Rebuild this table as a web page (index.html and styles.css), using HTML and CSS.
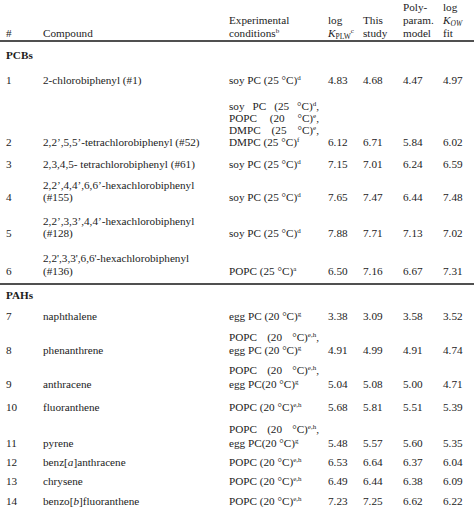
FILE: index.html
```html
<!DOCTYPE html>
<html>
<head>
<meta charset="utf-8">
<link rel="stylesheet" href="styles.css">
</head>
<body>
<table class="tbl">
<colgroup><col class="c-num"><col class="c-cmp"><col class="c-cond"><col class="c-d1"><col class="c-d2"><col class="c-d3"><col class="c-d4"></colgroup>
<thead>
<tr>
<th>#</th>
<th>Compound</th>
<th>Experimental<br>conditions<sup>b</sup></th>
<th>log<br><i>K</i><sub>PLW</sub><sup>c</sup></th>
<th>This<br>study</th>
<th>Poly-<br>param.<br>model</th>
<th>log<br><i>K</i><sub><i>OW</i></sub><br>fit</th>
</tr>
</thead>
<tbody>
<tr class="sec"><td colspan="7">PCBs</td></tr>
<tr class="pt9"><td>1</td><td>2-chlorobiphenyl (#1)</td><td class="cond">soy PC (25 °C)<sup>d</sup></td><td>4.83</td><td>4.68</td><td>4.47</td><td>4.97</td></tr>
<tr class="pt9"><td>2</td><td>2,2’,5,5’-tetrachlorobiphenyl (#52)</td><td class="cond"><span class="jl">soy PC (25 °C)<sup>d</sup>,</span><span class="jl">POPC (20 °C)<sup>e</sup>,</span><span class="jl">DMPC (25 °C)<sup>e</sup>,</span>DMPC (25 °C)<sup>f</sup></td><td>6.12</td><td>6.71</td><td>5.84</td><td>6.02</td></tr>
<tr class="pt5"><td>3</td><td>2,3,4,5- tetrachlorobiphenyl (#61)</td><td class="cond">soy PC (25 °C)<sup>d</sup></td><td>7.15</td><td>7.01</td><td>6.24</td><td>6.59</td></tr>
<tr class="pt5"><td>4</td><td>2,2’,4,4’,6,6’-hexachlorobiphenyl<br>(#155)</td><td class="cond">soy PC (25 °C)<sup>d</sup></td><td>7.65</td><td>7.47</td><td>6.44</td><td>7.48</td></tr>
<tr class="pt7"><td>5</td><td>2,2’,3,3’,4,4’-hexachlorobiphenyl<br>(#128)</td><td class="cond">soy PC (25 °C)<sup>d</sup></td><td>7.88</td><td>7.71</td><td>7.13</td><td>7.02</td></tr>
<tr class="pt9 sec-end"><td>6</td><td>2,2',3,3',6,6'-hexachlorobiphenyl<br>(#136)</td><td class="cond">POPC (25 °C)<sup>a</sup></td><td>6.50</td><td>7.16</td><td>6.67</td><td>7.31</td></tr>
<tr class="sec pt4"><td colspan="7">PAHs</td></tr>
<tr class="pt5"><td>7</td><td>naphthalene</td><td class="cond">egg PC (20 °C)<sup>g</sup></td><td>3.38</td><td>3.09</td><td>3.58</td><td>3.52</td></tr>
<tr class="pt5"><td>8</td><td>phenanthrene</td><td class="cond"><span class="jl">POPC (20 °C)<sup>e,h</sup>,</span>egg PC (20 °C)<sup>g</sup></td><td>4.91</td><td>4.99</td><td>4.91</td><td>4.74</td></tr>
<tr class="pt4"><td>9</td><td>anthracene</td><td class="cond"><span class="jl">POPC (20 °C)<sup>e,h</sup>,</span><span class="ln2">egg PC(20 °C)<sup>g</sup></span></td><td>5.04</td><td>5.08</td><td>5.00</td><td>4.71</td></tr>
<tr class="pt6"><td>10</td><td>fluoranthene</td><td class="cond">POPC (20 °C)<sup>e,h</sup></td><td>5.68</td><td>5.81</td><td>5.51</td><td>5.39</td></tr>
<tr class="pt6"><td>11</td><td>pyrene</td><td class="cond"><span class="jl">POPC (20 °C)<sup>e,h</sup>,</span><span class="ln2">egg PC(20 °C)<sup>g</sup></span></td><td>5.48</td><td>5.57</td><td>5.60</td><td>5.35</td></tr>
<tr class="pt2"><td>12</td><td>benz[<i>a</i>]anthracene</td><td class="cond">POPC (20 °C)<sup>e,h</sup></td><td>6.53</td><td>6.64</td><td>6.37</td><td>6.04</td></tr>
<tr class="pt3"><td>13</td><td>chrysene</td><td class="cond">POPC (20 °C)<sup>e,h</sup></td><td>6.49</td><td>6.44</td><td>6.38</td><td>6.09</td></tr>
<tr class="pt4"><td>14</td><td>benzo[<i>b</i>]fluoranthene</td><td class="cond">POPC (20 °C)<sup>e,h</sup></td><td>7.23</td><td>7.25</td><td>6.62</td><td>6.22</td></tr>
</tbody>
</table>
</body>
</html>
```

FILE: styles.css
```css
html, body {
  margin: 0;
  padding: 0;
  background: #ffffff;
}

body {
  font-family: "Liberation Serif", "Times New Roman", serif;
  font-size: 11.2px;
  color: #1c1c1c;
}

.tbl {
  border-collapse: separate;
  border-spacing: 0;
  width: 474px;
  table-layout: fixed;
}

.c-num { width: 37px; }
.c-cmp { width: 186px; }
.c-cond { width: 99px; }
.c-d1 { width: 35px; }
.c-d2 { width: 40px; }
.c-d3 { width: 40px; }
.c-d4 { width: 37px; }

.tbl th {
  font-weight: normal;
  text-align: left;
  vertical-align: bottom;
  line-height: 13px;
  padding: 1px 0 0 6px;
  border-bottom: 2px solid #505050;
}

.tbl td {
  vertical-align: bottom;
  text-align: left;
  line-height: 12.3px;
  padding: 4px 0 4px 6px;
}

.tbl td.cond {
  padding-right: 3px;
}

.sec td {
  font-weight: bold;
  padding-top: 7px;
}

.sec-end td {
  border-bottom: 2px solid #505050;
  padding-bottom: 6px;
}

.jl {
  display: block;
  text-align: justify;
  text-align-last: justify;
}

.ln2 {
  display: block;
  padding-top: 2px;
}

sup {
  font-size: 7px;
  line-height: 0;
  vertical-align: 4px;
}

sub {
  font-size: 7.5px;
  line-height: 0;
  vertical-align: -2px;
}

.pt2 td { padding-top: 2px; }
.pt3 td { padding-top: 3px; }
.pt4 td { padding-top: 4px; }
.pt5 td { padding-top: 5px; }
.pt6 td { padding-top: 6px; }
.pt7 td { padding-top: 7px; }
.pt9 td { padding-top: 9px; }
```
